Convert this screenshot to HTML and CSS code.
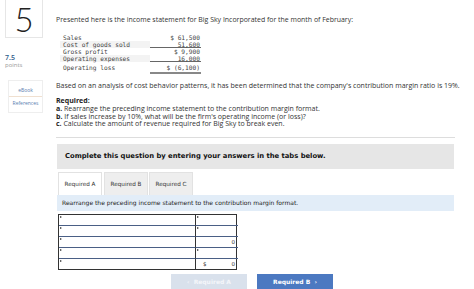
FILE: index.html
```html
<!DOCTYPE html>
<html>
<head>
<meta charset="utf-8">
<link rel="stylesheet" href="styles.css">
</head>
<body>
<div class="page">
  <aside class="side">
    <div class="qnum">5</div>
    <div class="pts"><div class="pv">7.5</div><div class="pl">points</div></div>
    <div class="links">
      <div class="lk">eBook</div>
      <div class="lk">References</div>
    </div>
  </aside>
  <main class="main">
    <p class="intro">Presented here is the income statement for Big Sky Incorporated for the month of February:</p>
    <div class="stmt">
      <div class="srow"><span class="lab">Sales</span><span class="val">$ 61,500</span></div>
      <div class="srow shade"><span class="lab">Cost of goods sold</span><span class="val ul">51,600</span></div>
      <div class="srow"><span class="lab">Gross profit</span><span class="val">$ 9,900</span></div>
      <div class="srow shade"><span class="lab">Operating expenses</span><span class="val ul">16,000</span></div>
      <div class="srow last"><span class="lab">Operating loss</span><span class="val dul">$ (6,100)</span></div>
    </div>
    <p class="para">Based on an analysis of cost behavior patterns, it has been determined that the company's contribution margin ratio is 19%.</p>
    <div class="req">
      <div class="rh">Required:</div>
      <div><b>a.</b> Rearrange the preceding income statement to the contribution margin format.</div>
      <div><b>b.</b> If sales increase by 10%, what will be the firm's operating income (or loss)?</div>
      <div><b>c.</b> Calculate the amount of revenue required for Big Sky to break even.</div>
    </div>
    <div class="rule"></div>
    <div class="complete">Complete this question by entering your answers in the tabs below.</div>
    <div class="tabs">
      <div class="tab active">Required A</div>
      <div class="tab">Required B</div>
      <div class="tab">Required C</div>
    </div>
    <div class="instr">Rearrange the preceding income statement to the contribution margin format.</div>
    <div class="grid">
      <div class="cell l"><i class="tri"></i></div><div class="cell r"><i class="tri"></i></div>
      <div class="cell l"><i class="tri"></i></div><div class="cell r"><i class="tri"></i></div>
      <div class="cell l"><i class="tri"></i></div><div class="cell r num"><span></span><span>0</span></div>
      <div class="cell l"><i class="tri"></i></div><div class="cell r"><i class="tri"></i></div>
      <div class="cell l"><i class="tri"></i></div><div class="cell r num"><span>$</span><span>0</span></div>
    </div>
    <div class="nav">
      <div class="btn off">&lsaquo;&nbsp;&nbsp;Required A</div>
      <div class="btn on">Required B&nbsp;&nbsp;&rsaquo;</div>
    </div>
  </main>
</div>
</body>
</html>
```
FILE: styles.css
```css
* { box-sizing: border-box; }
html, body { margin: 0; padding: 0; background: #fff; }
body { width: 474px; height: 289px; overflow: hidden; font-family: "Open Sans", "Liberation Sans", sans-serif; color: #333; }
.page { display: flex; }
.side { width: 56px; flex: none; display: flex; flex-direction: column; }
.qnum { margin-left: 5px; width: 38px; height: 38px; border: 1px solid #e6e6e6; border-top: none; font-family: "Lato", "Open Sans", sans-serif; font-size: 33px; font-weight: 300; line-height: 38px; text-align: center; color: #222; }
.pts { margin: 16px 0 0 5px; }
.pv { font-size: 7px; line-height: 8px; color: #2d5a8a; font-weight: 600; }
.pl { font-size: 6px; line-height: 7px; color: #999; }
.links { margin: 11px 0 0 8px; width: 35px; border: 1px solid #eee; padding: 3px 0; }
.lk { font-size: 5px; line-height: 12px; text-align: center; color: #5a80b0; }
.lk + .lk { border-top: 1px solid #f0e0d0; }
.main { width: 410px; flex: none; padding-top: 15px; }
.intro { margin: 0; font-size: 6.95px; line-height: 10px; color: #333; }
.stmt { margin: 9px 0 0 4px; width: 142px; font-family: "DejaVu Sans Mono", "Liberation Mono", monospace; font-size: 6.2px; color: #444; }
.srow { display: flex; flex: none; height: 7px; line-height: 7px; }
.srow.shade .lab { background: #f3f3f3; }
.srow.last { height: 10px; line-height: 7px; margin-top: 2px; }
.lab { width: 90px; padding-left: 3px; }
.val { width: 51px; text-align: right; padding-right: 1px; }
.val.ul { border-bottom: 1px solid #666; }
.val.dul { height: 10px; padding-top: 1px; border-bottom: 2px double #888; line-height: 6px; }
.para { margin: 7px 0 0; font-size: 7px; line-height: 10px; white-space: nowrap; }
.req { margin-top: 6px; font-size: 7px; line-height: 7.5px; white-space: nowrap; }
.rh { font-weight: 700; color: #222; margin-bottom: 0.5px; }
.req b { font-weight: 700; color: #222; }
.rule { margin-top: 9px; width: 399px; height: 1px; background: #ddd; }
.complete { margin: 6px 0 0 1px; width: 397px; height: 25px; background: #e6e6e6; padding-left: 8px; font-family: "DejaVu Sans", Verdana, sans-serif; font-weight: 700; font-size: 6.8px; line-height: 25px; color: #111; }
.tabs { display: flex; gap: 1px; margin: 3px 0 0 2px; height: 23px; }
.tab { width: 44px; height: 23px; background: #eee; border: 1px solid #e2e2e2; border-bottom: none; font-family: "DejaVu Sans", Verdana, sans-serif; font-size: 5.7px; line-height: 22px; text-align: center; color: #333; }
.tab.active { background: #fff; margin-right: 1px; }
.instr { margin-left: 1px; width: 397px; height: 16px; background: #e2edf8; padding-left: 5px; font-family: "DejaVu Sans", Verdana, sans-serif; font-size: 6px; line-height: 16px; color: #222; }
.grid { margin: 3px 0 0 2px; width: 179px; display: grid; grid-template-columns: 137px 42px; border: 1px solid #333; }
.cell { position: relative; height: 11px; border-bottom: 1px solid #4a5f85; }
.cell:nth-last-child(-n+2) { border-bottom: none; height: 10px; }
.cell.l { border-right: 1px solid #333; }
.tri { position: absolute; left: 1px; top: 1px; width: 0; height: 0; border-top: 1.5px solid transparent; border-bottom: 1.5px solid transparent; border-left: 2px solid #333; }
.num { display: flex; justify-content: space-between; padding: 0 3px 0 7px; font-family: "DejaVu Sans", Verdana, sans-serif; font-size: 5.5px; line-height: 11px; color: #333; }
.nav { display: flex; gap: 10px; margin: 4px 0 0 115px; }
.btn { width: 76px; height: 16px; font-family: "DejaVu Sans", Verdana, sans-serif; font-size: 6px; font-weight: 700; line-height: 16px; text-align: center; color: #fff; }
.btn.off { background: #d9e1ec; color: #f4f6fa; }
.btn.on { background: #4c79c1; }
```
